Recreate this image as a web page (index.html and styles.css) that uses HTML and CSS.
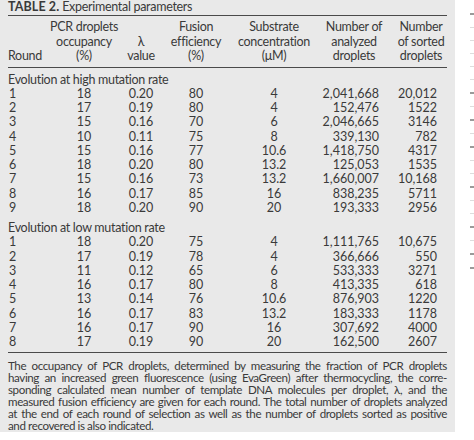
FILE: index.html
```html
<!DOCTYPE html>
<html>
<head>
<meta charset="utf-8">
<link rel="stylesheet" href="styles.css">
</head>
<body>
<div class="page">
  <div class="panel">
    <div class="title"><b>TABLE 2.</b> Experimental parameters</div>
    <table class="tbl">
      <colgroup>
        <col class="c1"><col class="c2"><col class="c3"><col class="c4"><col class="c5"><col class="c6"><col class="c7">
      </colgroup>
      <thead>
        <tr>
          <th class="l">Round</th>
          <th>PCR droplets<br>occupancy<br>(%)</th>
          <th>λ<br>value</th>
          <th>Fusion<br>efficiency<br>(%)</th>
          <th>Substrate<br>concentration<br>(μM)</th>
          <th>Number of<br>analyzed<br>droplets</th>
          <th class="sorted">Number<br>of sorted<br>droplets</th>
        </tr>
      </thead>
      <tbody>
        <tr class="sec"><td colspan="7">Evolution at high mutation rate</td></tr>
        <tr><td>1</td><td>18</td><td>0.20</td><td>80</td><td>4</td><td>2,041,668</td><td>20,012</td></tr>
        <tr><td>2</td><td>17</td><td>0.19</td><td>80</td><td>4</td><td>152,476</td><td>1522</td></tr>
        <tr><td>3</td><td>15</td><td>0.16</td><td>70</td><td>6</td><td>2,046,665</td><td>3146</td></tr>
        <tr><td>4</td><td>10</td><td>0.11</td><td>75</td><td>8</td><td>339,130</td><td>782</td></tr>
        <tr><td>5</td><td>15</td><td>0.16</td><td>77</td><td>10.6</td><td>1,418,750</td><td>4317</td></tr>
        <tr><td>6</td><td>18</td><td>0.20</td><td>80</td><td>13.2</td><td>125,053</td><td>1535</td></tr>
        <tr><td>7</td><td>15</td><td>0.16</td><td>73</td><td>13.2</td><td>1,660,007</td><td>10,168</td></tr>
        <tr><td>8</td><td>16</td><td>0.17</td><td>85</td><td>16</td><td>838,235</td><td>5711</td></tr>
        <tr><td>9</td><td>18</td><td>0.20</td><td>90</td><td>20</td><td>193,333</td><td>2956</td></tr>
        <tr class="sec sec2"><td colspan="7">Evolution at low mutation rate</td></tr>
        <tr><td>1</td><td>18</td><td>0.20</td><td>75</td><td>4</td><td>1,111,765</td><td>10,675</td></tr>
        <tr><td>2</td><td>17</td><td>0.19</td><td>78</td><td>4</td><td>366,666</td><td>550</td></tr>
        <tr><td>3</td><td>11</td><td>0.12</td><td>65</td><td>6</td><td>533,333</td><td>3271</td></tr>
        <tr><td>4</td><td>16</td><td>0.17</td><td>80</td><td>8</td><td>413,335</td><td>618</td></tr>
        <tr><td>5</td><td>13</td><td>0.14</td><td>76</td><td>10.6</td><td>876,903</td><td>1220</td></tr>
        <tr><td>6</td><td>16</td><td>0.17</td><td>83</td><td>13.2</td><td>183,333</td><td>1178</td></tr>
        <tr><td>7</td><td>16</td><td>0.17</td><td>90</td><td>16</td><td>307,692</td><td>4000</td></tr>
        <tr class="last"><td>8</td><td>17</td><td>0.19</td><td>90</td><td>20</td><td>162,500</td><td>2607</td></tr>
      </tbody>
    </table>
    <div class="note">
      <span class="ln">The occupancy of PCR droplets, determined by measuring the fraction of PCR droplets</span>
      <span class="ln">having an increased green fluorescence (using EvaGreen) after thermocycling, the corre-</span>
      <span class="ln">sponding calculated mean number of template DNA molecules per droplet, λ, and the</span>
      <span class="ln">measured fusion efficiency are given for each round. The total number of droplets analyzed</span>
      <span class="ln">at the end of each round of selection as well as the number of droplets sorted as positive</span>
      <span class="ln end">and recovered is also indicated.</span>
    </div>
  </div>
  <div class="edge">
    <span class="mk dk"></span><span class="mk"></span><span class="mk"></span><span class="mk"></span><span class="mk"></span><span class="mk"></span><span class="mk dk"></span><span class="mk"></span><span class="mk dk"></span><span class="mk"></span><span class="mk dk"></span><span class="mk"></span><span class="mk"></span><span class="mk dk"></span><span class="mk"></span><span class="mk"></span><span class="mk dk"></span><span class="mk"></span><span class="mk dk"></span><span class="mk dk"></span>
  </div>
</div>
</body>
</html>
```
FILE: styles.css
```css
html, body {
  margin: 0;
  padding: 0;
  background: #ffffff;
}
.page {
  display: flex;
  align-items: flex-start;
  width: 474px;
  height: 440px;
  overflow: hidden;
}
.panel {
  width: 439px;
  height: 432px;
  padding: 0 8px;
  background: #e9e9e9;
  color: #3a3a3a;
  font-family: Lato, "Open Sans", sans-serif;
  font-size: 12.5px;
  letter-spacing: -0.3px;
  flex: none;
}
.title {
  height: 15px;
  line-height: 13px;
  font-size: 12.5px;
  white-space: nowrap;
}
.title b {
  font-weight: 700;
  letter-spacing: 0.1px;
}
.tbl {
  width: 439px;
  table-layout: fixed;
  border-collapse: collapse;
  border-top: 1.5px solid #4a4a4a;
}
.c1 { width: 42px; }
.c2 { width: 68px; }
.c3 { width: 46px; }
.c4 { width: 64px; }
.c5 { width: 92px; }
.c6 { width: 68px; }
.c7 { width: 59px; }
.tbl th {
  font-weight: 400;
  text-align: center;
  vertical-align: bottom;
  line-height: 14.5px;
  padding: 4px 0 3px 0;
  white-space: nowrap;
  border-bottom: 1.5px solid #4a4a4a;
}
.tbl th.l { text-align: left; }
.tbl th.sorted { padding-left: 7px; }
.tbl td {
  padding: 0;
  line-height: 14.25px;
  height: 14.25px;
  text-align: center;
  white-space: nowrap;
  letter-spacing: 0;
}
.tbl td:first-child { text-align: left; padding-left: 1px; }
.tbl td:nth-child(6) { text-align: right; padding-right: 9px; }
.tbl td:nth-child(7) { text-align: right; padding-right: 10px; }
.tbl tr.sec td { text-align: left; padding-left: 0; padding-top: 5px; letter-spacing: -0.3px; }
.tbl tr.sec2 td { padding-top: 6px; }
.tbl tr.last td { padding-bottom: 3px; border-bottom: 1.5px solid #4a4a4a; }
.note {
  margin-top: 7px;
  font-size: 11.6px;
  line-height: 12px;
  letter-spacing: -0.4px;
}
.ln {
  display: block;
  line-height: 12px;
  text-align: justify;
  text-align-last: justify;
}
.ln.end { text-align-last: left; }
.edge {
  flex: 1;
  display: flex;
  flex-direction: column;
  align-items: flex-end;
  gap: 12px;
  padding-top: 13px;
}
.mk {
  display: block;
  width: 4px;
  height: 1px;
  background: #dddddd;
}
.mk.dk { background: #9a9a9a; height: 2px; }
```
